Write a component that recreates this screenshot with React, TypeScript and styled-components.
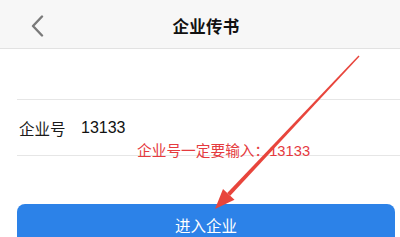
import React from "react";
import styled, { createGlobalStyle } from "styled-components";

const Global = createGlobalStyle`
  html, body { margin: 0; padding: 0; background: #ffffff; overflow: hidden; }
  body { font-family: "Noto Sans CJK SC", "Noto Sans", sans-serif; }
`;

const Screen = styled.div`
  position: relative;
  width: 412px;
  height: 237px;
  overflow: hidden;
  background: #ffffff;
`;

const NavBar = styled.header`
  background: #f7f7f7;
  border-bottom: 1px solid #e2e2e2;
  display: grid;
  grid-template-columns: 60px 1fr 60px;
  align-items: center;
  padding-top: 4px;
  box-sizing: content-box;
  height: 44px;
`;

const BackButton = styled.div`
  display: flex;
  align-items: center;
  padding-left: 31px;
  color: #7a7a7a;
`;

const Title = styled.h1`
  margin: 0;
  text-align: center;
  font-size: 16.5px;
  font-weight: 700;
  color: #111111;
  letter-spacing: 0.2px;
`;

const Form = styled.section`
  margin-top: 50px;
  margin-left: 17px;
  border-top: 1px solid #e6e6e6;
  border-bottom: 1px solid #e6e6e6;
`;

const Row = styled.div`
  height: 55px;
  display: flex;
  align-items: center;
  padding-left: 2px;
  padding-top: 1px;
  box-sizing: border-box;
`;

const Label = styled.span`
  font-size: 15.5px;
  color: #1a1a1a;
  width: 62px;
`;

const Value = styled.span`
  font-family: "Liberation Sans", "Noto Sans", sans-serif;
  font-size: 16px;
  color: #111111;
`;

const PrimaryButton = styled.button`
  display: flex;
  align-items: center;
  justify-content: center;
  margin: 48px 17px 0;
  width: calc(100% - 34px);
  height: 44px;
  border: none;
  border-radius: 8px;
  background: #2c82e8;
  color: #ffffff;
  font-family: "Noto Sans CJK SC", sans-serif;
  font-size: 15.5px;
  padding: 0;
  padding-bottom: 2px;
`;

const Note = styled.div`
  position: absolute;
  left: 137px;
  top: 141px;
  font-size: 14.7px;
  line-height: 18px;
  color: #e53a3e;
  white-space: nowrap;
`;

const NoteNum = styled.span`
  font-family: "Liberation Sans", sans-serif;
`;

const Overlay = styled.svg`
  position: absolute;
  left: 0;
  top: 0;
  pointer-events: none;
`;

export default function App() {
  return (
    <>
      <Global />
      <Screen>
        <NavBar>
          <BackButton>
            <svg width="14" height="22" viewBox="0 0 14 22">
              <path d="M11 1.5 L2 11 L11 20.5" fill="none" stroke="#7a7a7a" strokeWidth="2.4" strokeLinecap="round" strokeLinejoin="round" />
            </svg>
          </BackButton>
          <Title>企业传书</Title>
          <div />
        </NavBar>
        <Form>
          <Row>
            <Label>企业号</Label>
            <Value>13133</Value>
          </Row>
        </Form>
        <PrimaryButton>进入企业</PrimaryButton>
        <Note>
          企业号一定要输入：<NoteNum>13133</NoteNum>
        </Note>
        <Overlay width="412" height="237" viewBox="0 0 412 237">
          <polygon
            points="359.5,56.5 230.2,195.8 227.2,193.0 358.5,55.5"
            fill="#e8453c"
          />
          <polygon points="215,209 234.5,199.8 223.0,189.0" fill="#e8453c" />
        </Overlay>
      </Screen>
    </>
  );
}
